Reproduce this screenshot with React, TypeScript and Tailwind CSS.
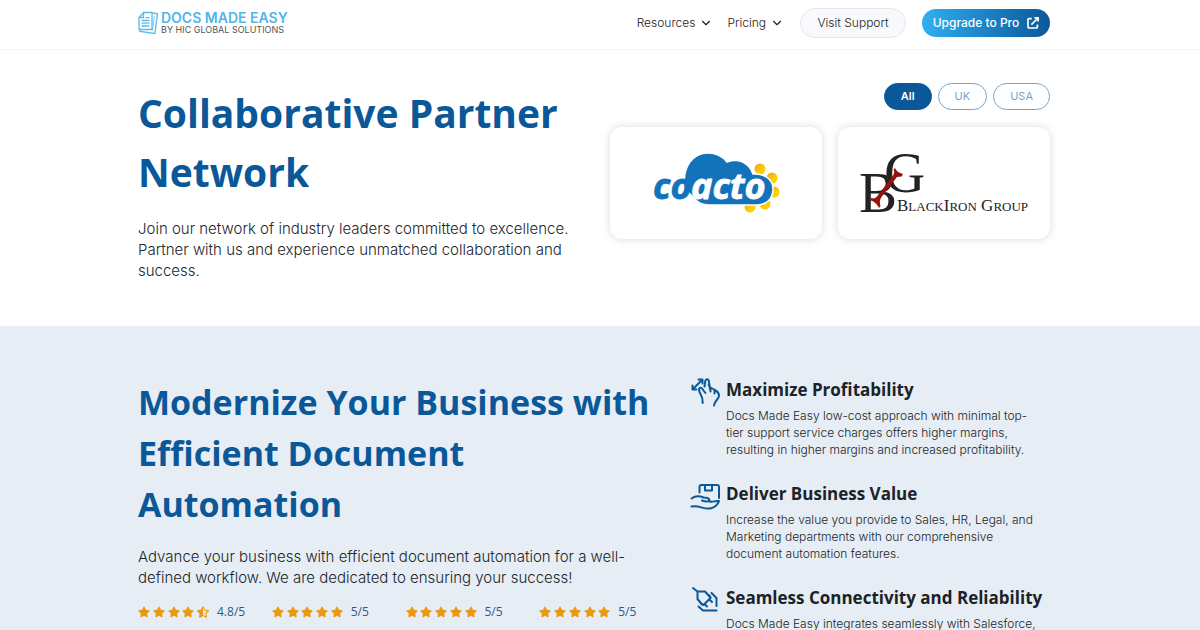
import type { ReactNode } from 'react';
import { useState } from 'react';
import { FaStar, FaStarHalfAlt } from 'react-icons/fa';
import { ChevronDown } from 'lucide-react';

const RATINGS = [
  { id: 'r-1', full: 4, half: true, label: '4.8/5' },
  { id: 'r-2', full: 5, half: false, label: '5/5' },
  { id: 'r-3', full: 5, half: false, label: '5/5' },
  { id: 'r-4', full: 5, half: false, label: '5/5' },
];

const FILTERS = ['All', 'UK', 'USA'];

function LogoMark() {
  return (
    <svg viewBox="0 0 21 24" className="h-6 w-[21px]" fill="none" stroke="#5ab9ec" strokeWidth="1.3" aria-hidden="true">
      <path d="M5.5 1.5h8.5v17H1v-12z" />
      <path d="M5.5 1.5v5H1" />
      <path d="M14.5 2l5 .8-2.6 19.7L2 20.5v-2" />
      <path d="M3.5 9.5h8M3.5 12.2h8M3.5 15h8M7.5 6.7h4" />
      <path d="M16.5 4.5l-2 15" strokeWidth=".8" />
    </svg>
  );
}

function ExternalIcon() {
  return (
    <svg viewBox="0 0 12 12" className="size-3" fill="none" stroke="currentColor" strokeWidth="1.7" aria-hidden="true">
      <path d="M4.8 1.6H2a1 1 0 0 0-1 1V10a1 1 0 0 0 1 1h7.4a1 1 0 0 0 1-1V7.4" />
      <path d="M4.4 7.6L11 1M7.4.9H11.1V4.6" />
    </svg>
  );
}

function CoactoLogo() {
  return (
    <svg viewBox="0 0 128 62" className="h-[62px] w-32 overflow-visible" role="img" aria-label="coacto">
      <defs>
        <linearGradient id="petal" x1="0" y1="0" x2="1" y2="1">
          <stop offset="0" stopColor="#f29a1c" />
          <stop offset="0.6" stopColor="#fdd100" />
        </linearGradient>
      </defs>
      <g fill="url(#petal)">
        <circle cx="108" cy="17" r="5.5" />
        <circle cx="120" cy="26" r="5.5" />
        <circle cx="122" cy="40" r="5.5" />
        <circle cx="113" cy="52" r="5.5" />
        <circle cx="98" cy="55" r="5.5" />
      </g>
      <path
        d="M33 34C30 15 41 1 56 1c9 0 15 4 19 9 11-4 22 0 26 12 12-1 20 6 20 15 0 10-7 16-16 16H57c-6 0-11-2-14-6l-6-6z"
        fill="#1273bb"
        stroke="#fff"
        strokeWidth="1.5"
      />
      <g fontFamily="Open Sans, sans-serif" fontStyle="italic" fontWeight="700" fontSize="36">
        <text x="1" y="47" fill="#1273bb" stroke="#1273bb" strokeWidth="0.8">
          co
        </text>
        <text x="39" y="47" fill="#fff" stroke="#fff" strokeWidth="0.8">
          acto
        </text>
      </g>
    </svg>
  );
}

function BlackIronLogo() {
  return (
    <svg viewBox="0 0 170 64" className="h-16 w-[170px] overflow-visible" role="img" aria-label="BlackIron Group">
      <g fontFamily="Liberation Serif, serif" fill="#222">
        <text x="0" y="61" fontSize="57">B</text>
        <text x="25" y="41" fontSize="57">G</text>
        <text x="38" y="60" fontSize="17">
          B<tspan fontSize="13">LACK</tspan>I<tspan fontSize="13">RON</tspan> G<tspan fontSize="13">ROUP</tspan>
        </text>
      </g>
      <path
        d="M36 17c1 3 4 5 8 6l-1.500 2.500-4.500.5-15.500 20c-2 3-2 6-1 9l-1.500 2c-2-4-5-7-9-7.500l1-2.500c3 1 4 .5 6-1.500l16-21c1.500-2 1.500-4 .5-6z"
        fill="#93130f"
      />
    </svg>
  );
}

const ICON_PROPS = {
  viewBox: '0 0 30 30',
  className: 'size-[30px] shrink-0',
  fill: 'none',
  stroke: '#0b5899',
  strokeWidth: 2,
  strokeLinecap: 'round',
  strokeLinejoin: 'round',
  'aria-hidden': true,
} as const;

function GestureIcon() {
  return (
    <svg {...ICON_PROPS}>
      <path d="M2.500 12.500L12.500 2.500M8.500 2.500h4V6.500M2.500 8.500v4h4" />
      <path d="M12.700 26c.4-4-.8-6.500-2-8.500-1.500-3-2.500-6-.9-6.700 1.500-.6 2.600.7 3.700 2.700l2 2.500" />
      <path d="M14.500 9.500l.8-5.500c.6-2.600 3.200-2.200 3.500 0l1.200 8M18.500 8l2 2.500 3.500 2c3 1.500 5 3 5 6 0 4-4.500 5-5 10M20.500 11v3.500M24.500 13.500v3" />
    </svg>
  );
}

function DeliverIcon() {
  return (
    <svg {...ICON_PROPS}>
      <g transform="translate(0 2)">
        <path d="M9.500 9.500V4c0-1.500.5-2 2-2H27c1.500 0 2 .5 2 2v11" />
        <path d="M15 2v5.500h7V2" />
        <path d="M1.500 15.500c4-3 8.500-2.500 12-1 3 0 6 .5 6 3-1.500 1.500-5 1-7.500 0" />
        <path d="M19.500 18.500c3 1 5.500-1 9.500-.5-1 4-5 7-9 7.500-7 1-9-3-18.500-2" />
      </g>
    </svg>
  );
}

function PlugIcon() {
  return (
    <svg {...ICON_PROPS}>
      <path d="M3 3l4.500 3.500H15l5.500 6M7.500 6.500V14l4.500 5.500" />
      <path d="M11 18.500l2.500 1.500 7-7-1-2.500M14.500 19l2.500 2.500M19.500 14.500l2.500 2.500" />
      <path d="M21.500 8l5 5v8M8.500 21.500l4.500 4h13.500" />
    </svg>
  );
}

const FEATURES: { id: string; title: string; text: string; icon: ReactNode }[] = [
  {
    id: 'f-1',
    title: 'Maximize Profitability',
    text: 'Docs Made Easy low-cost approach with minimal top-tier support service charges offers higher margins, resulting in higher margins and increased profitability.',
    icon: <GestureIcon />,
  },
  {
    id: 'f-2',
    title: 'Deliver Business Value',
    text: 'Increase the value you provide to Sales, HR, Legal, and Marketing departments with our comprehensive document automation features.',
    icon: <DeliverIcon />,
  },
  {
    id: 'f-3',
    title: 'Seamless Connectivity and Reliability',
    text: 'Docs Made Easy integrates seamlessly with Salesforce,',
    icon: <PlugIcon />,
  },
];

function Header() {
  return (
    <header className="flex h-[50px] items-center justify-between border-b border-gray-100 bg-white pb-1 pl-[11.5%] pr-[12.5%] shadow-xs">
      <a href="#" className="flex items-center gap-0.5">
        <LogoMark />
        <span className="flex flex-col">
          <span className="text-[14px] font-semibold leading-[14px] text-[#4fb5ea]">DOCS MADE EASY</span>
          <span className="text-[9px] font-normal leading-[10px] text-[#555]">BY HIC GLOBAL SOLUTIONS</span>
        </span>
      </a>
      <nav className="flex items-center text-[12px] text-[#222]">
        <button type="button" className="mr-3.5 flex items-center gap-1">
          Resources
          <ChevronDown className="size-3.5" />
        </button>
        <button type="button" className="mr-4 flex items-center gap-1">
          Pricing
          <ChevronDown className="size-3.5" />
        </button>
        <a href="#" className="mr-4 flex h-[30px] w-[106px] items-center justify-center rounded-full border border-gray-200 bg-[#f8f9fc]">
          Visit Support
        </a>
        <a
          href="#"
          className="flex h-7 w-32 items-center justify-center gap-2 rounded-full bg-linear-to-r from-[#2fb0f3] to-[#0b5899] font-medium text-white"
        >
          Upgrade to Pro
          <ExternalIcon />
        </a>
      </nav>
    </header>
  );
}

function Partners() {
  const [active, setActive] = useState('All');

  return (
    <section className="flex min-h-[276px] bg-white pb-8 pl-[11.5%] pr-[12.5%] pt-[33px]">
      <div className="flex-1">
        <h1 className="text-[39px] font-bold leading-[59px] text-[#0b5899] font-['Open_Sans',sans-serif]">
          Collaborative Partner Network
        </h1>
        <p className="mt-[17px] max-w-[440px] text-[15px] leading-[21px]">
          Join our network of industry leaders committed to excellence. Partner with us and experience unmatched
          collaboration and success.
        </p>
      </div>
      <div className="flex w-[440px] flex-col gap-[17px]">
        <div className="flex justify-end gap-1.5 text-[11px]">
          {FILTERS.map((name) => (
            <button
              key={name}
              type="button"
              onClick={() => setActive(name)}
              className={
                name === active
                  ? 'h-[27px] rounded-full border border-[#0b5899] bg-[#0b5899] px-4 font-semibold text-white'
                  : 'h-[27px] rounded-full border border-[#7ba3c8] px-4 font-normal text-[#7ba3c8]'
              }
            >
              {name}
            </button>
          ))}
        </div>
        <div className="grid grid-cols-2 gap-4">
          <div className="flex h-28 items-center justify-center rounded-xl bg-white shadow-[0_0_8px_rgba(0,0,0,0.15)]">
            <CoactoLogo />
          </div>
          <div className="flex h-28 items-center justify-center rounded-xl bg-white shadow-[0_0_8px_rgba(0,0,0,0.15)]">
            <BlackIronLogo />
          </div>
        </div>
      </div>
    </section>
  );
}

function Rating({ full, half, label }: { full: number; half: boolean; label: string }) {
  return (
    <div className="flex items-center gap-2">
      <div className="flex w-[71px] justify-between text-[12px] text-[#ea9a12]">
        {Array.from({ length: full }, (_, i) => (
          <FaStar key={i} />
        ))}
        {half && <FaStarHalfAlt />}
      </div>
      <span className="text-[12px] font-normal leading-4 text-[#30598a] font-['Open_Sans',sans-serif]">{label}</span>
    </div>
  );
}

function Modernize() {
  return (
    <section className="flex min-h-[304px] justify-between bg-[#e6edf4] pl-[11.5%] pr-[12.5%] pt-[51px]">
      <div className="w-[535px]">
        <h2 className="max-w-[520px] text-[34px] font-bold leading-[51px] text-[#0b5899] font-['Open_Sans',sans-serif]">
          Modernize Your Business with Efficient Document Automation
        </h2>
        <p className="mt-4 max-w-[510px] text-[15px] leading-[21px]">
          Advance your business with efficient document automation for a well-defined workflow. We are dedicated to
          ensuring your success!
        </p>
        <div className="mt-4 grid grid-cols-4">
          {RATINGS.map((rating) => (
            <Rating key={rating.id} full={rating.full} half={rating.half} label={rating.label} />
          ))}
        </div>
      </div>
      <ul className="flex w-[360px] flex-col gap-[23px]">
        {FEATURES.map((feature) => (
          <li key={feature.id} className="flex gap-1.5">
            {feature.icon}
            <div>
              <h3 className="text-[17px] font-bold leading-[25px] text-[#1b2228] font-['Open_Sans',sans-serif]">
                {feature.title}
              </h3>
              <p className="mt-[5px] max-w-[312px] text-[12px] leading-[17px]">{feature.text}</p>
            </div>
          </li>
        ))}
      </ul>
    </section>
  );
}

export default function App() {
  return (
    <div className="min-h-screen bg-white font-light text-[#212529] font-['Inter',sans-serif]">
      <Header />
      <Partners />
      <Modernize />
    </div>
  );
}
